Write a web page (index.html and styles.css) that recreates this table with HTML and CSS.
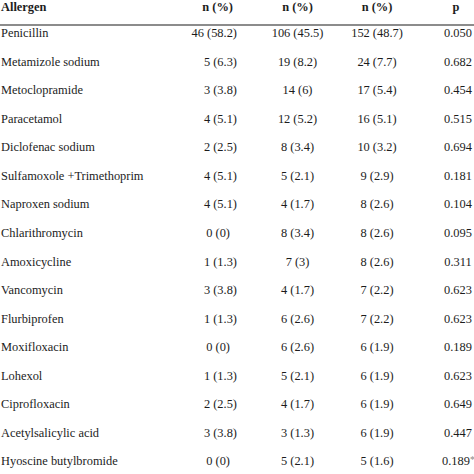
FILE: index.html
```html
<!DOCTYPE html>
<html>
<head>
<meta charset="utf-8">
<link rel="stylesheet" href="styles.css">
</head>
<body>
<table class="allergy">
  <colgroup>
    <col class="c-name"><col class="c-a"><col class="c-b"><col class="c-c"><col class="c-p">
  </colgroup>
  <thead>
    <tr><th class="name">Allergen</th><th class="a">n (%)</th><th class="b">n (%)</th><th class="c">n (%)</th><th class="p">p</th></tr>
  </thead>
  <tbody>
    <tr><td class="name">Penicillin</td><td class="a">46 (58.2)</td><td class="b">106 (45.5)</td><td class="c">152 (48.7)</td><td class="p">0.050</td></tr>
    <tr><td class="name">Metamizole sodium</td><td class="a">5 (6.3)</td><td class="b">19 (8.2)</td><td class="c">24 (7.7)</td><td class="p">0.682</td></tr>
    <tr><td class="name">Metoclopramide</td><td class="a">3 (3.8)</td><td class="b">14 (6)</td><td class="c">17 (5.4)</td><td class="p">0.454</td></tr>
    <tr><td class="name">Paracetamol</td><td class="a">4 (5.1)</td><td class="b">12 (5.2)</td><td class="c">16 (5.1)</td><td class="p">0.515</td></tr>
    <tr><td class="name">Diclofenac sodium</td><td class="a">2 (2.5)</td><td class="b">8 (3.4)</td><td class="c">10 (3.2)</td><td class="p">0.694</td></tr>
    <tr><td class="name">Sulfamoxole +Trimethoprim</td><td class="a">4 (5.1)</td><td class="b">5 (2.1)</td><td class="c">9 (2.9)</td><td class="p">0.181</td></tr>
    <tr><td class="name">Naproxen sodium</td><td class="a">4 (5.1)</td><td class="b">4 (1.7)</td><td class="c">8 (2.6)</td><td class="p">0.104</td></tr>
    <tr><td class="name">Chlarithromycin</td><td class="a zero">0 (0)</td><td class="b">8 (3.4)</td><td class="c">8 (2.6)</td><td class="p">0.095</td></tr>
    <tr><td class="name">Amoxicycline</td><td class="a">1 (1.3)</td><td class="b">7 (3)</td><td class="c">8 (2.6)</td><td class="p">0.311</td></tr>
    <tr><td class="name">Vancomycin</td><td class="a">3 (3.8)</td><td class="b">4 (1.7)</td><td class="c">7 (2.2)</td><td class="p">0.623</td></tr>
    <tr><td class="name">Flurbiprofen</td><td class="a">1 (1.3)</td><td class="b">6 (2.6)</td><td class="c">7 (2.2)</td><td class="p">0.623</td></tr>
    <tr><td class="name">Moxifloxacin</td><td class="a zero">0 (0)</td><td class="b">6 (2.6)</td><td class="c">6 (1.9)</td><td class="p">0.189</td></tr>
    <tr><td class="name">Lohexol</td><td class="a">1 (1.3)</td><td class="b">5 (2.1)</td><td class="c">6 (1.9)</td><td class="p">0.623</td></tr>
    <tr><td class="name">Ciprofloxacin</td><td class="a">2 (2.5)</td><td class="b">4 (1.7)</td><td class="c">6 (1.9)</td><td class="p">0.649</td></tr>
    <tr><td class="name">Acetylsalicylic acid</td><td class="a">3 (3.8)</td><td class="b">3 (1.3)</td><td class="c">6 (1.9)</td><td class="p">0.447</td></tr>
    <tr><td class="name">Hyoscine butylbromide</td><td class="a zero">0 (0)</td><td class="b">5 (2.1)</td><td class="c">5 (1.6)</td><td class="p flag">0.189<sup class="mark">*</sup></td></tr>
  </tbody>
</table>
</body>
</html>
```
FILE: styles.css
```css
html, body {
  margin: 0;
  padding: 0;
  background: #ffffff;
}

body {
  width: 474px;
  height: 474px;
  overflow: hidden;
  font-family: "Liberation Serif", "Times New Roman", serif;
  font-size: 12.4px;
  color: #1c1c1c;
}

.allergy {
  width: 474px;
  border-collapse: collapse;
  table-layout: fixed;
}

.c-name { width: 180px; }
.c-a { width: 77px; }
.c-b { width: 81px; }
.c-c { width: 78px; }
.c-p { width: 58px; }

.allergy th,
.allergy td {
  padding: 0;
  line-height: 14px;
  white-space: nowrap;
  vertical-align: top;
  overflow: visible;
}

.allergy th {
  font-weight: bold;
  padding-bottom: 10px;
  border-bottom: 2px solid #8c8c8c;
}

.allergy td {
  padding-bottom: 14.57px;
}

.allergy .name {
  text-align: left;
  padding-left: 1px;
}

.allergy .a {
  text-align: right;
  padding-right: 20px;
}

.allergy th.a {
  padding-right: 24px;
}

.allergy td.zero {
  padding-right: 27px;
}

.allergy .b,
.allergy .c {
  text-align: center;
}

.allergy .p {
  text-align: center;
  padding-left: 26px;
}

.allergy th.p {
  padding-left: 22px;
}

.allergy td.flag {
  padding-right: 4px;
}

.mark {
  font-size: 10px;
  color: #888;
  line-height: 0;
  vertical-align: 2px;
}
```
